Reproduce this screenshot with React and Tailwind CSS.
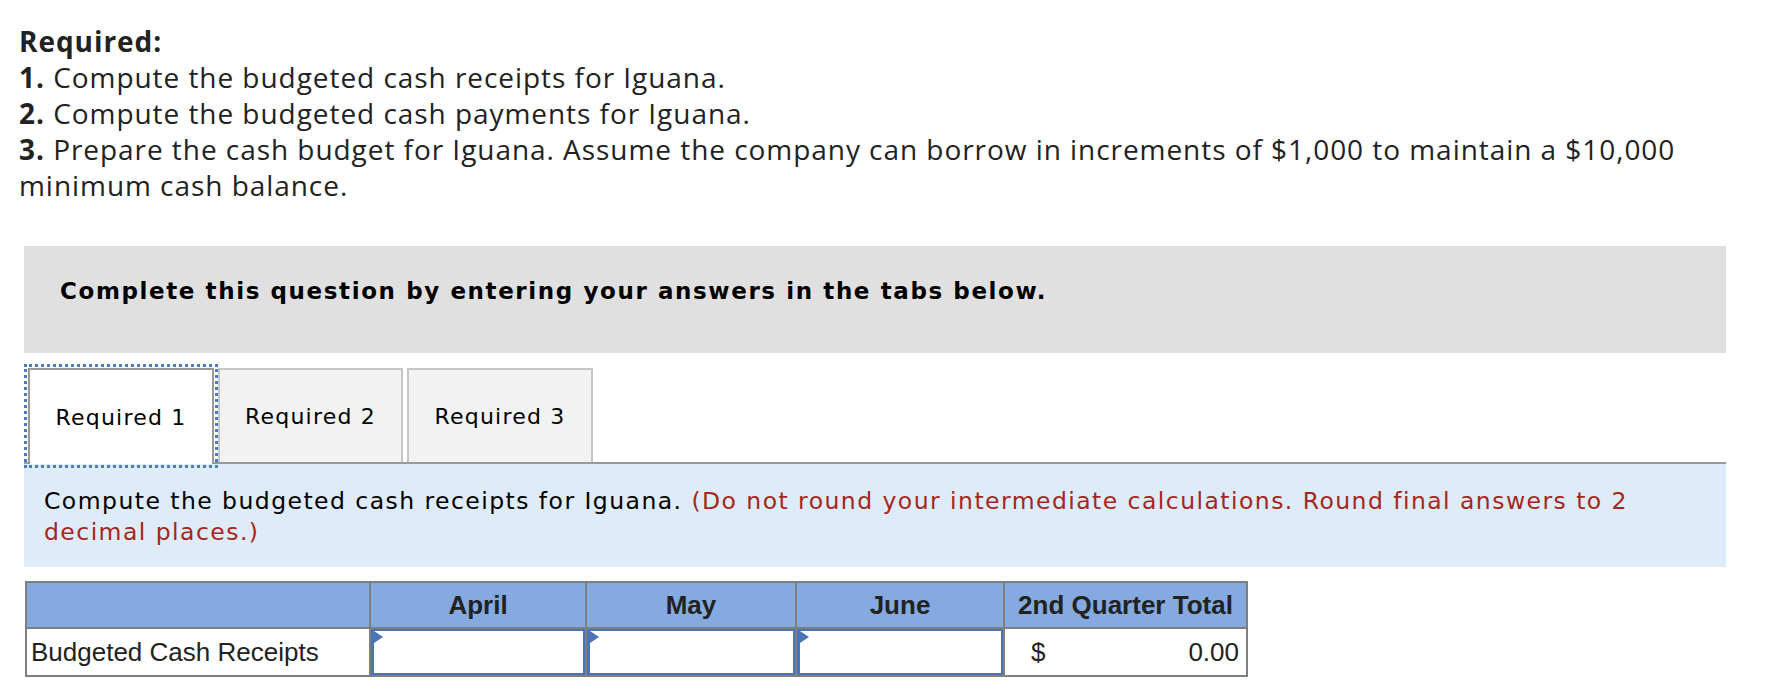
export default function App() {
  const verdana = "font-['Verdana','DejaVu_Sans',sans-serif]";
  const arial = "font-['Liberation_Sans','Arial',sans-serif]";
  return (
    <div className="w-[1784px] h-[692px] bg-white overflow-hidden">
      <div className="pl-[19px] pt-[23px] text-[28px] leading-[36px] tracking-[0.95px] text-[#222] whitespace-nowrap font-['Open_Sans',sans-serif]">
        <div className="font-bold">Required:</div>
        <div><span className="font-bold">1.</span> Compute the budgeted cash receipts for Iguana.</div>
        <div><span className="font-bold">2.</span> Compute the budgeted cash payments for Iguana.</div>
        <div>
          <span className="font-bold">3.</span> Prepare the cash budget for Iguana. Assume the company can borrow in increments of $1,000 to maintain a $10,000
          <br />
          minimum cash balance.
        </div>
      </div>

      <div className={`ml-[24px] mt-[43px] w-[1702px] h-[107px] bg-[#e0e0e0] pl-[36px] pt-[30px] text-[23px] leading-[30px] tracking-[1.6px] font-bold text-black whitespace-nowrap ${verdana}`}>
        Complete this question by entering your answers in the tabs below.
      </div>

      <div className={`ml-[24px] mt-[15px] w-[1702px] flex items-end gap-[4px] pl-[4px] border-b-2 border-[#999999] text-[22px] tracking-[1.2px] text-black ${verdana}`}>
        <div className="relative -mb-[2px] w-[186px] h-[96px] bg-white border-2 border-b-0 border-[#999999] outline-dotted outline-3 outline-offset-1 outline-[#4a7cc2] flex items-center justify-center">
          Required 1
        </div>
        <div className="w-[185px] h-[94px] bg-[#f2f2f2] border-2 border-b-0 border-[#c6c6c6] flex items-center justify-center">
          Required 2
        </div>
        <div className="w-[186px] h-[94px] bg-[#f2f2f2] border-2 border-b-0 border-[#c6c6c6] flex items-center justify-center">
          Required 3
        </div>
      </div>

      <div className={`ml-[24px] w-[1702px] h-[103px] bg-[#deebf8] pl-[20px] pt-[22px] text-[23.5px] leading-[31px] tracking-[1.45px] text-black whitespace-nowrap ${verdana}`}>
        Compute the budgeted cash receipts for Iguana.{" "}
        <span className="text-[#a52620]">
          (Do not round your intermediate calculations. Round final answers to 2
          <br />
          decimal places.)
        </span>
      </div>

      <div className={`ml-[25px] mt-[14px] w-[1223px] border-2 border-[#7f7f7f] text-[26px] text-[#222] ${arial}`}>
        <div className="flex h-[46px] bg-[#84aadf] border-b-2 border-[#7f7f7f] font-bold">
          <div className="w-[344px] border-r-2 border-[#7f7f7f]" />
          <div className="w-[216px] border-r-2 border-[#7f7f7f] flex items-center justify-center">April</div>
          <div className="w-[210px] border-r-2 border-[#7f7f7f] flex items-center justify-center">May</div>
          <div className="w-[208px] border-r-2 border-[#7f7f7f] flex items-center justify-center">June</div>
          <div className="flex-1 flex items-center justify-center whitespace-nowrap">2nd Quarter Total</div>
        </div>
        <div className="flex h-[46px] bg-white">
          <div className="w-[344px] border-r-2 border-[#7f7f7f] flex items-center pl-[4px] whitespace-nowrap">Budgeted Cash Receipts</div>
          {[216, 210, 208].map((w, i) => (
            <div key={i} className="border-r-2 border-[#7f7f7f] h-full" style={{ width: w }}>
              <div className="relative w-full h-full border-2 border-l-[3px] border-[#4a74b4] bg-white">
                <div className="absolute left-0 top-0 w-0 h-0 border-y-[6px] border-y-transparent border-l-[9px] border-l-[#4a74b4]" />
              </div>
            </div>
          ))}
          <div className="flex-1 flex items-center justify-between pl-[26px] pr-[7px]">
            <span>$</span>
            <span>0.00</span>
          </div>
        </div>
      </div>
    </div>
  );
}
